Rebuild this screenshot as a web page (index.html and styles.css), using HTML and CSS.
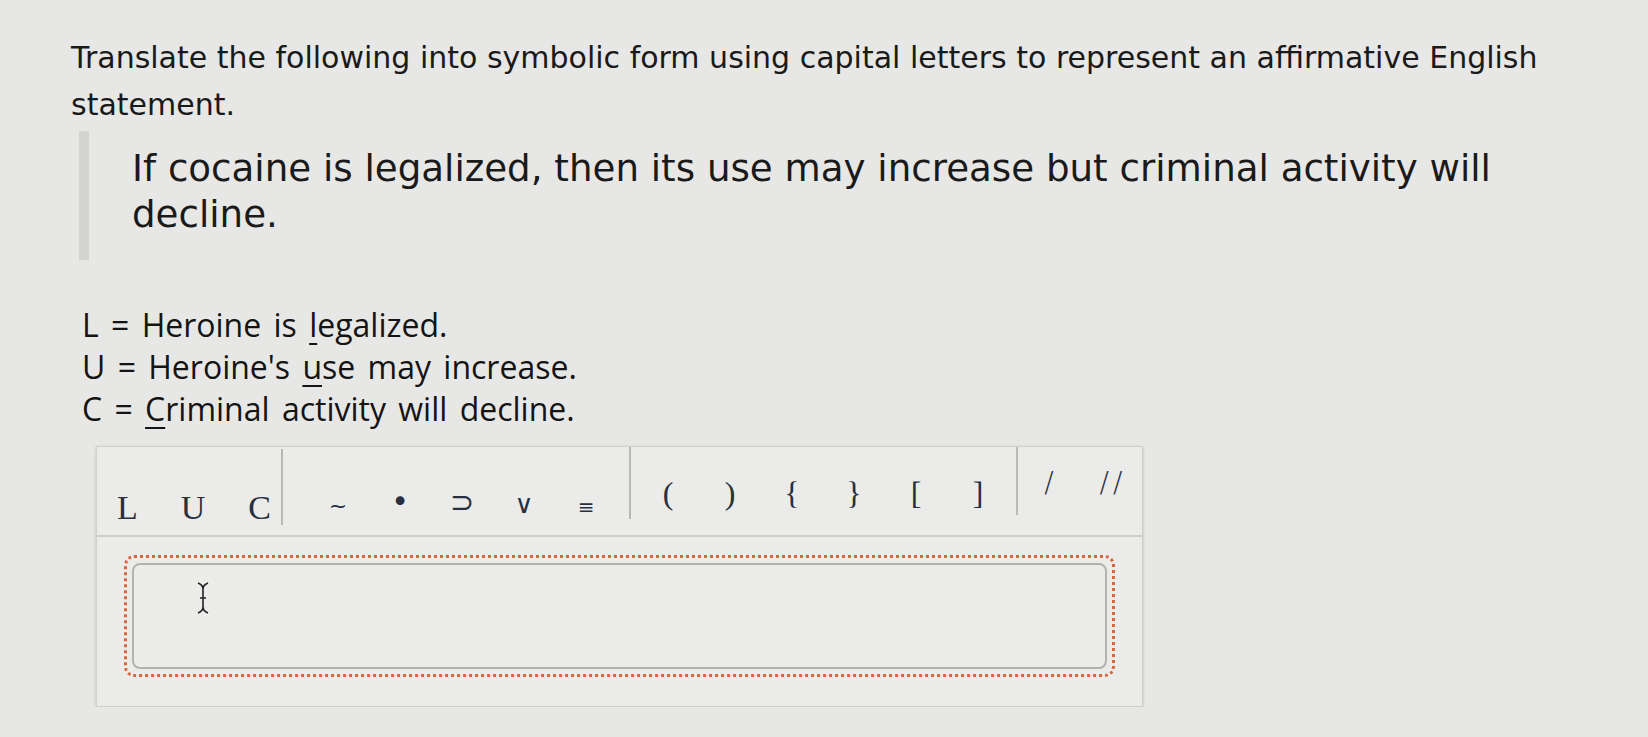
FILE: index.html
```html
<!DOCTYPE html>
<html>
<head>
<meta charset="utf-8">
<link rel="stylesheet" href="styles.css">
</head>
<body>
<div class="page">
  <p class="prompt">Translate the following into symbolic form using capital letters to represent an affirmative English statement.</p>
  <blockquote class="quote">If cocaine is legalized, then its use may increase but criminal activity will decline.</blockquote>
  <div class="defs">
    <div>L = Heroine is <u>l</u>egalized.</div>
    <div>U = Heroine's <u>u</u>se may increase.</div>
    <div>C = <u>C</u>riminal activity will decline.</div>
  </div>
  <div class="widget">
    <div class="toolbar">
      <div class="group letters"><span>L</span><span>U</span><span>C</span></div>
      <div class="group ops"><span class="tilde">~</span><span class="dot">•</span><span class="sup">⊃</span><span class="vee">∨</span><span class="equiv">≡</span></div>
      <div class="group brackets"><span>(</span><span>)</span><span>{</span><span>}</span><span>[</span><span>]</span></div>
      <div class="group slashes"><span>/</span><span>//</span></div>
    </div>
    <div class="answer">
      <div class="focus">
        <div class="input">
          <svg class="ibeam" width="14" height="32" viewBox="0 0 14 32">
            <path d="M2 1 Q7 3 7 7 Q7 3 12 1 M7 7 L7 25 M2 31 Q7 29 7 25 Q7 29 12 31 M4 16 L10 16" fill="none" stroke="#222" stroke-width="1.6"/>
          </svg>
        </div>
      </div>
    </div>
  </div>
</div>
</body>
</html>
```
FILE: styles.css
```css
html, body {
  margin: 0;
  padding: 0;
  background: #e7e7e5;
}
.page {
  padding: 34px 0 0 71px;
  width: 1480px;
  color: #1a1a1a;
}
.prompt {
  font-family: "DejaVu Sans", sans-serif;
  font-size: 30px;
  line-height: 47px;
  margin: 0;
}
.quote {
  font-family: "DejaVu Sans", sans-serif;
  font-size: 37.2px;
  line-height: 46px;
  margin: 3px 0 0 8px;
  padding: 14px 0 23px 43px;
  border-left: 10px solid #d3d3d1;
  width: 1400px;
}
.defs {
  font-family: "Open Sans", sans-serif;
  font-size: 32px;
  line-height: 42px;
  word-spacing: 4px;
  margin: 44px 0 0 11px;
  color: #141414;
}
.defs u {
  text-decoration-thickness: 2px;
  text-underline-offset: 6px;
}
.widget {
  margin: 16px 0 0 25px;
  width: 1047px;
  height: 261px;
  background: #ebebe9;
  border: 1px solid #d0d0ce;
  box-shadow: 0 1px 3px rgba(0,0,0,0.18);
  box-sizing: border-box;
}
.toolbar {
  display: flex;
  align-items: flex-start;
  height: 90px;
  border-bottom: 2px solid #cdcdcb;
  box-sizing: border-box;
  font-family: "Liberation Serif", serif;
  color: #283040;
}
.group {
  display: flex;
  align-items: flex-end;
  box-sizing: border-box;
}
.group span {
  display: block;
  text-align: center;
  line-height: 1;
}
.letters {
  font-size: 34px;
  gap: 43px;
  padding-left: 20px;
  padding-right: 10px;
  border-right: 2px solid #b9b9b7;
  height: 76px;
  margin-top: 2px;
  padding-bottom: 0;
}
.ops {
  font-family: "DejaVu Sans", sans-serif;
  padding-left: 24px;
  padding-right: 12px;
  border-right: 2px solid #b9b9b7;
  height: 72px;
  margin-top: 0;
  padding-bottom: 2px;
}
.ops span { width: 62px; }
.ops .tilde { font-size: 22px; }
.ops .dot { font-size: 30px; }
.ops .sup { font-size: 29px; }
.ops .vee { font-size: 26px; }
.ops .equiv { font-size: 20px; }
.brackets {
  font-size: 32px;
  padding-left: 6px;
  padding-right: 7px;
  border-right: 2px solid #b9b9b7;
  height: 68px;
  margin-top: 0;
  padding-bottom: 6px;
}
.brackets span { width: 62px; }
.slashes {
  font-family: "DejaVu Sans", sans-serif;
  font-weight: 300;
  font-size: 28px;
  padding-left: 2px;
  height: 60px;
  padding-bottom: 10px;
}
.slashes span { width: 62px; letter-spacing: 4px; }
.answer {
  padding: 18px 27px 0 27px;
}
.focus {
  border: 3px dotted #d8663d;
  border-radius: 10px;
  padding: 5px;
}
.input {
  height: 106px;
  border: 2px solid #b2b2b0;
  border-radius: 8px;
  background: #ececea;
  padding: 17px 0 0 62px;
  box-sizing: border-box;
}
.ibeam {
  display: block;
}
```
